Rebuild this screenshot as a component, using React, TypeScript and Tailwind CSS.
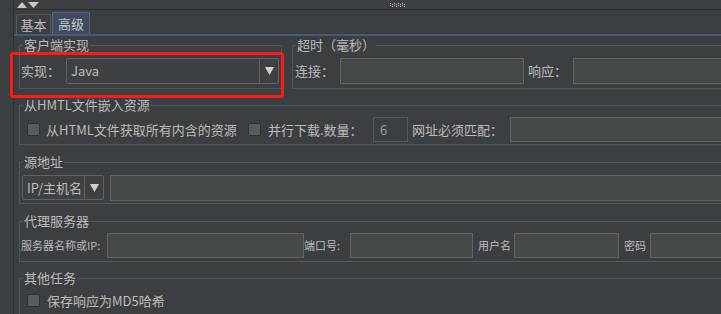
import type { ReactNode } from "react";

const line = "border-[#54575a]";

function Group({ title, width, body, children }: { title: string; width: string; body: string; children: ReactNode }) {
    return (
        <div className={width}>
            <div className="flex h-[14px]">
                <div className={`h-[7px] w-[4px] self-end border-l border-t ${line}`} />
                <span className="whitespace-nowrap px-[1px] text-[13px] leading-[14px]">{title}</span>
                <div className={`h-[7px] flex-1 self-end border-r border-t ${line}`} />
            </div>
            <div className={`overflow-hidden border-x border-b ${line} ${body}`}>{children}</div>
        </div>
    );
}

function Field({ width, h = "h-[25px]", children }: { width: string; h?: string; children?: ReactNode }) {
    return <div className={`${width} ${h} shrink-0 border border-[#646464] bg-[#45494a]`}>{children}</div>;
}

function Label({ width, h = "h-[25px]", className = "", children }: { width: string; h?: string; className?: string; children: ReactNode }) {
    return <div className={`${width} ${h} ${className} flex shrink-0 items-center whitespace-nowrap`}>{children}</div>;
}

function Arrow() {
    return (
        <svg width="9" height="8" viewBox="0 0 9 8">
            <polygon points="0,0 9,0 4.5,8" fill="#d0d0d0" />
        </svg>
    );
}

function Combo({ width, text, h }: { width: string; text: string; h: string }) {
    return (
        <div className={`${width} ${h} flex shrink-0 rounded-[2px] border border-[#5f6263] bg-[#3e4143]`}>
            <div className="flex flex-1 items-center whitespace-nowrap pl-[4px] text-[13px] text-[#bbbbbb]">{text}</div>
            <div className="flex w-[19px] items-center justify-center border-l border-[#5f6263]">
                <Arrow />
            </div>
        </div>
    );
}

function Check() {
    return <div className="h-[13px] w-[13px] shrink-0 rounded-[2px] border border-[#2e3032] bg-[#595c5e]" />;
}

export default function App() {
    return (
        <div className="relative flex h-[314px] w-[721px] overflow-hidden bg-[#3c3f41] font-['Noto_Sans_CJK_SC','Noto_Sans',sans-serif] text-[#bbbbbb]">
            <div className="w-[14px] shrink-0 border-r border-[#2e3032]" />
            <div className="flex min-w-0 flex-1 flex-col">
                <div className="flex h-[10px] shrink-0 items-start border-b border-[#2b2d2f]">
                    <svg className="ml-[3px] mt-[2px]" width="22" height="6" viewBox="0 0 22 6">
                        <polygon points="0,6 5,0 10,6" fill="#c8c8c8" />
                        <polygon points="11,0 22,0 16.5,6" fill="#c8c8c8" />
                    </svg>
                    <svg className="ml-[351px] mt-[3px]" width="15" height="4" viewBox="0 0 15 4">
                        {[0, 2, 4, 6, 8, 10, 12, 14].map((x) => (
                            <g key={x}>
                                <rect x={x} y={x % 4 === 0 ? 0 : 1} width="1" height="1" fill="#c8c8c8" />
                                <rect x={x} y={x % 4 === 0 ? 2 : 3} width="1" height="1" fill="#c8c8c8" />
                            </g>
                        ))}
                    </svg>
                </div>

                <div className="flex h-[26px] shrink-0 items-end border-b-2 border-[#485876] pl-[2px]">
                    <div className="flex h-[20px] w-[35px] items-center justify-center rounded-t-[2px] border-x border-t border-[#55585a] text-[13px]">基本</div>
                    <div className="ml-[1px] flex h-[22px] w-[38px] items-center justify-center rounded-t-[2px] border-x border-t border-[#5a6880] bg-[#3e4b60] text-[13px] text-[#c8c8c8]">高级</div>
                </div>

                <div className="flex flex-col pl-[5px] pt-[2px] text-[13px]">
                    <div className="flex items-start">
                        <Group title="客户端实现" width="w-[263px] shrink-0" body="flex h-[37px] items-start pl-[1px] pt-[6px]">
                            <Label width="w-[45px]" h="h-[26px]">实现：</Label>
                            <Combo width="w-[213px]" h="h-[26px]" text="Java" />
                        </Group>
                        <Group title="超时（毫秒）" width="ml-[10px] w-[440px] shrink-0" body="flex h-[37px] items-start pl-[2px] pt-[6px]">
                            <Label width="w-[45px]" h="h-[26px]">连接：</Label>
                            <Field width="w-[184px]" h="h-[26px]" />
                            <Label width="w-[45px]" h="h-[26px]" className="ml-[4px]">响应：</Label>
                            <Field width="w-[180px]" h="h-[26px]" />
                        </Group>
                    </div>

                    <Group title="从HMTL文件嵌入资源" width="mt-[9px] w-[710px]" body="flex h-[33px] items-start pl-[7px] pt-[5px]">
                        <div className="flex h-[25px] shrink-0 items-center">
                            <Check />
                            <span className="ml-[6px] w-[202px] whitespace-nowrap">从HTML文件获取所有内含的资源</span>
                            <Check />
                            <span className="ml-[7px] w-[105px] whitespace-nowrap">并行下载.数量：</span>
                        </div>
                        <div className="flex h-[25px] w-[35px] shrink-0 items-center border border-[#55585a] pl-[6px] text-[#8f9aa6]">6</div>
                        <Label width="w-[98px]" className="ml-[4px]">网址必须匹配：</Label>
                        <Field width="w-[220px]" />
                    </Group>

                    <Group title="源地址" width="mt-[10px] w-[710px]" body="flex h-[35px] items-start pl-[2px] pt-[6px]">
                        <Combo width="w-[82px]" h="h-[25px]" text="IP/主机名" />
                        <Field width="ml-[6px] w-[620px]" h="h-[26px]" />
                    </Group>

                    <Group title="代理服务器" width="mt-[10px] w-[710px]" body="flex h-[34px] items-start pl-[1px] pt-[5px] text-[11px]">
                        <Label width="w-[86px]">服务器名称或IP:</Label>
                        <Field width="w-[197px]" />
                        <Label width="w-[46px]">端口号:</Label>
                        <Field width="w-[123px]" />
                        <Label width="w-[36px]" className="ml-[5px]">用户名</Label>
                        <Field width="w-[105px]" />
                        <Label width="w-[26px]" className="ml-[5px]">密码</Label>
                        <Field width="w-[100px]" />
                    </Group>

                    <Group title="其他任务" width="mt-[9px] w-[710px]" body="flex h-[40px] items-start pl-[7px] pt-[9px]">
                        <div className="flex items-center">
                            <Check />
                            <span className="ml-[7px] whitespace-nowrap leading-[13px]">保存响应为MD5哈希</span>
                        </div>
                    </Group>
                </div>
            </div>

            <div className="absolute left-[10px] top-[52px] h-[46px] w-[274px] rounded-[3px] border-[3px] border-[#ff1a1a]" />
        </div>
    );
}
